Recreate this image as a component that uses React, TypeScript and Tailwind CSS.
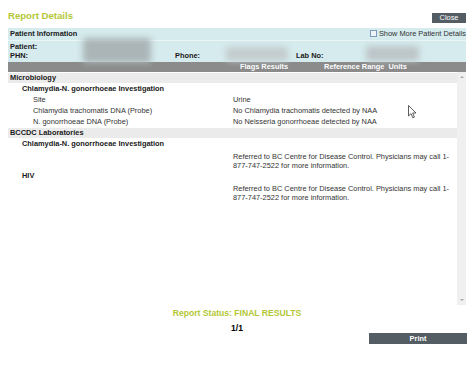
import React from "react";

const FONT = { fontFamily: '"Liberation Sans", Arial, sans-serif' };

type Row =
  | { kind: "section"; label: string }
  | { kind: "group"; label: string }
  | { kind: "item"; label: string; value: string }
  | { kind: "note"; lines: string[] };

const ROWS: Row[] = [
  { kind: "section", label: "Microbiology" },
  { kind: "group", label: "Chlamydia-N. gonorrhoeae Investigation" },
  { kind: "item", label: "Site", value: "Urine" },
  { kind: "item", label: "Chlamydia trachomatis DNA (Probe)", value: "No Chlamydia trachomatis detected by NAA" },
  { kind: "item", label: "N. gonorrhoeae DNA (Probe)", value: "No Neisseria gonorrhoeae detected by NAA" },
  { kind: "section", label: "BCCDC Laboratories" },
  { kind: "group", label: "Chlamydia-N. gonorrhoeae Investigation" },
  {
    kind: "note",
    lines: ["Referred to BC Centre for Disease Control. Physicians may call 1-", "877-747-2522 for more information."],
  },
  { kind: "group", label: "HIV" },
  {
    kind: "note",
    lines: ["Referred to BC Centre for Disease Control. Physicians may call 1-", "877-747-2522 for more information."],
  },
];

export default function App() {
  return (
    <div className="relative h-[375px] w-[474px] overflow-hidden bg-white text-[7.4px] text-[#1a1a1a]" style={FONT}>
      {/* Title + close */}
      <div className="flex h-[28px] items-start justify-between px-[8px] pt-[10px]">
        <h1 className="text-[9.6px] font-bold leading-[11px] text-[#b3c735]">Report Details</h1>
        <button className="mt-[3px] h-[10px] w-[34px] bg-[#545d64] text-[7.4px] leading-[10px] text-white">Close</button>
      </div>

      <div className="mx-[8px]">
        {/* Patient information band */}
        <div className="relative bg-[#d5ebee]">
          <div className="flex h-[13px] items-center justify-between border-b border-[#eaf5f6] pl-[2px]">
            <span className="font-bold">Patient Information</span>
            <label className="flex items-center gap-[2px] text-[#333]">
              <span className="inline-block h-[7px] w-[7px] border border-[#7d9bbd] bg-[#eef3f8]" />
              Show More Patient Details
            </label>
          </div>
          <div className="grid h-[21px] grid-cols-[165px_121px_1fr] items-end pb-[2px] pl-[2px] font-bold leading-[9px]">
            <div>
              <div>Patient:</div>
              <div>PHN:</div>
            </div>
            <div>Phone:</div>
            <div>Lab No:</div>
          </div>
          {/* redacted values */}
          <div className="absolute left-[75px] top-[10px] h-[25px] w-[68px] rounded-[3px] bg-[#abb5b7] blur-[3px]" />
          <div className="absolute left-[218px] top-[19px] h-[14px] w-[62px] rounded-[3px] bg-[#c3cccd] blur-[3px]" />
          <div className="absolute left-[358px] top-[18px] h-[15px] w-[53px] rounded-[3px] bg-[#bcc5c7] blur-[3px]" />
        </div>

        {/* Column header bar */}
        <div className="flex h-[10px] items-center bg-[#8b8b8b] font-bold leading-[10px] text-white">
          <span className="ml-[232px]">Flags Results</span>
          <span className="ml-[36px]">Reference Range</span>
          <span className="ml-[4px]">Units</span>
        </div>

        {/* Results area with scrollbar */}
        <div className="flex h-[233px]">
          <div className="flex-1">
            {ROWS.map((r, i) => {
              if (r.kind === "section")
                return (
                  <div key={i} className="mt-[1px] h-[10px] bg-[#ebebeb] pl-[2px] font-bold leading-[10px]">
                    {r.label}
                  </div>
                );
              if (r.kind === "group")
                return (
                  <div key={i} className="h-[11px] pl-[14px] font-bold leading-[11px]">
                    {r.label}
                  </div>
                );
              if (r.kind === "item")
                return (
                  <div key={i} className="flex h-[11px] leading-[11px] text-[#333]">
                    <span className="w-[200px] pl-[25px]">{r.label}</span>
                    <span className="pl-[25px]">{r.value}</span>
                  </div>
                );
              return (
                <div key={i} className="pl-[225px] pt-[3px] leading-[9px] text-[#333]">
                  {r.lines.map((l) => (
                    <div key={l}>{l}</div>
                  ))}
                </div>
              );
            })}
          </div>
          <div className="flex w-[9px] flex-col items-center justify-between bg-[#f0f0f0] py-[4px]">
            <span className="h-0 w-0 border-x-[2px] border-b-[2px] border-x-transparent border-b-[#a8a8a8]" />
            <span className="h-0 w-0 border-x-[2px] border-t-[2px] border-x-transparent border-t-[#a8a8a8]" />
          </div>
        </div>

        {/* Footer */}
        <div className="mt-[2px] h-[12px] text-center text-[8.6px] font-bold leading-[12px] text-[#b3c735]">
          Report Status: FINAL RESULTS
        </div>
        <div className="mt-[4px] h-[11px] text-center text-[8.6px] font-bold leading-[11px] text-black">1/1</div>
        <div className="flex justify-end">
          <button className="-mr-[1px] -mt-[1px] h-[11px] w-[98px] bg-[#545d64] font-bold leading-[11px] text-white">
            Print
          </button>
        </div>
      </div>

      {/* mouse pointer */}
      <svg className="absolute left-[408px] top-[105px]" width="9" height="14" viewBox="0 0 9 14">
        <path d="M0.5 0.5 L0.5 11 L3 8.6 L4.8 12.8 L6.4 12.1 L4.7 8 L8 8 Z" fill="#fff" stroke="#333" strokeWidth="0.8" />
      </svg>
    </div>
  );
}
